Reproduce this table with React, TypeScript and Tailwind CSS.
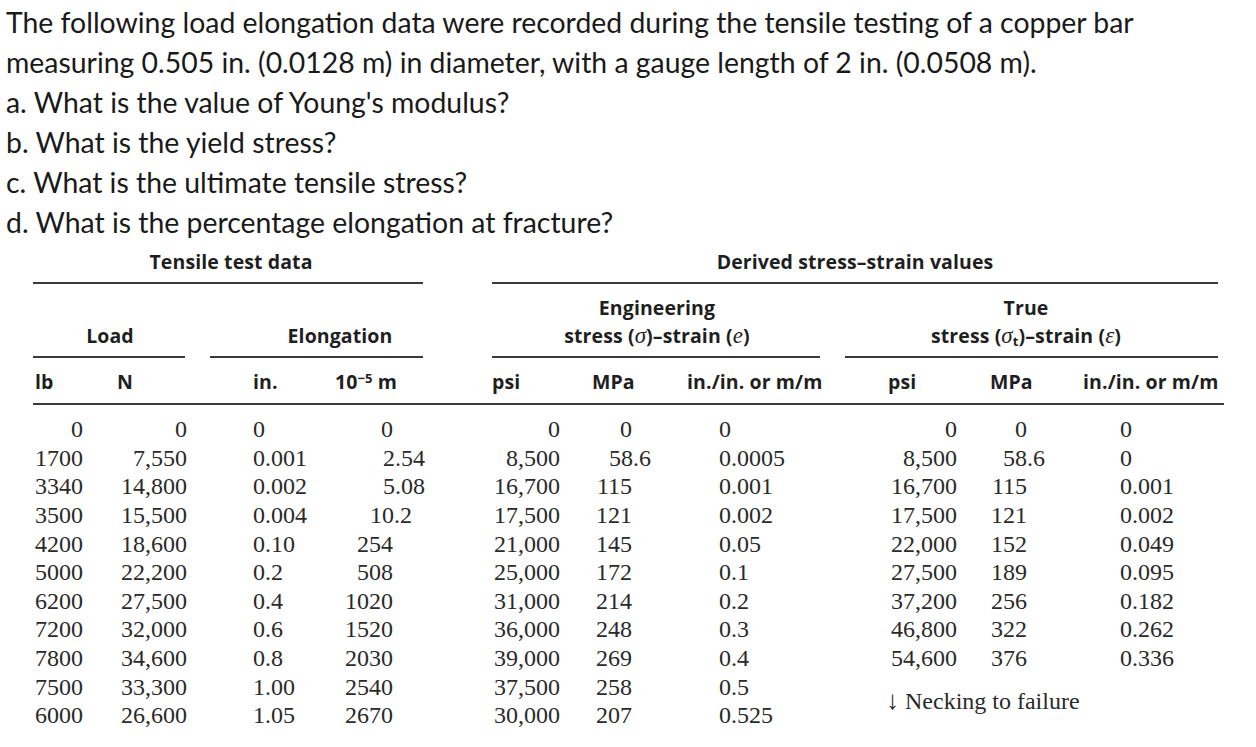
import React from "react";

const rows: string[][] = [
  ["0", "0", "0", "0", "0", "0", "0", "0", "0", "0"],
  ["1700", "7,550", "0.001", "2.54", "8,500", "58.6", "0.0005", "8,500", "58.6", "0"],
  ["3340", "14,800", "0.002", "5.08", "16,700", "115", "0.001", "16,700", "115", "0.001"],
  ["3500", "15,500", "0.004", "10.2", "17,500", "121", "0.002", "17,500", "121", "0.002"],
  ["4200", "18,600", "0.10", "254", "21,000", "145", "0.05", "22,000", "152", "0.049"],
  ["5000", "22,200", "0.2", "508", "25,000", "172", "0.1", "27,500", "189", "0.095"],
  ["6200", "27,500", "0.4", "1020", "31,000", "214", "0.2", "37,200", "256", "0.182"],
  ["7200", "32,000", "0.6", "1520", "36,000", "248", "0.3", "46,800", "322", "0.262"],
  ["7800", "34,600", "0.8", "2030", "39,000", "269", "0.4", "54,600", "376", "0.336"],
  ["7500", "33,300", "1.00", "2540", "37,500", "258", "0.5"],
  ["6000", "26,600", "1.05", "2670", "30,000", "207", "0.525"],
];

function dPad(v: string) {
  if (v === "2.54" || v === "5.08") return "pr-[5px]";
  if (v === "10.2") return "pr-[18px]";
  return "pr-[37px]";
}

function Rule({ className }: { className: string }) {
  return <div className={"h-[2px] bg-[#3a3a3a] " + className} />;
}

export default function App() {
  return (
    <div className="w-[1256px] h-[747px] bg-white overflow-hidden">
      <div className="pt-[2px] pl-[6px] font-['Lato',sans-serif] text-[28.4px] leading-[40px] text-[#1a1a1a]">
        <p>The following load elongation data were recorded during the tensile testing of a copper bar</p>
        <p>measuring 0.505 in. (0.0128 m) in diameter, with a gauge length of 2 in. (0.0508 m).</p>
        <p>a. What is the value of Young's modulus?</p>
        <p>b. What is the yield stress?</p>
        <p>c. What is the ultimate tensile stress?</p>
        <p>d. What is the percentage elongation at fracture?</p>
      </div>

      <div className="font-['Open_Sans',sans-serif] font-bold text-[19.5px] text-[#1f1f1f] tracking-[0.1px]">
        {/* Top group titles */}
        <div className="flex h-[40px] items-center">
          <div className="ml-[33px] w-[396px] text-center">Tensile test data</div>
          <div className="ml-[63px] w-[726px] text-center">Derived stress–strain values</div>
        </div>
        <div className="flex">
          <Rule className="ml-[33px] w-[390px]" />
          <Rule className="ml-[69px] w-[726px]" />
        </div>

        {/* Sub group titles */}
        <div className="flex mt-[10px] leading-[28px]">
          <div className="ml-[33px] w-[154px] pt-[28px] text-center">Load</div>
          <div className="ml-[23px] w-[260px] pt-[28px] text-center">Elongation</div>
          <div className="ml-[22px] w-[330px] text-center">
            <div>Engineering</div>
            <div>
              stress (<span className="font-['Liberation_Serif',serif] italic font-normal text-[23px]">σ</span>)–strain (
              <span className="font-['Liberation_Serif',serif] italic font-normal text-[23px]">e</span>)
            </div>
          </div>
          <div className="ml-[49px] w-[310px] text-center">
            <div>True</div>
            <div>
              stress (<span className="font-['Liberation_Serif',serif] italic font-normal text-[23px]">σ</span>
              <sub className="text-[13px]">t</sub>)–strain (
              <span className="font-['Liberation_Serif',serif] italic font-normal text-[23px]">ε</span>)
            </div>
          </div>
        </div>
        <div className="flex mt-[6px]">
          <Rule className="ml-[33px] w-[152px]" />
          <Rule className="ml-[25px] w-[213px]" />
          <Rule className="ml-[69px] w-[328px]" />
          <Rule className="ml-[25px] w-[373px]" />
        </div>

        {/* Column headers */}
        <div className="flex mt-[10px] h-[28px] items-center">
          <div className="w-[64px] ml-[33px] pl-[2px]">lb</div>
          <div className="w-[113px] pl-[20px]">N</div>
          <div className="w-[125px] pl-[43px]">in.</div>
          <div className="w-[95px]">
            10<sup className="text-[13px]">−5</sup> m
          </div>
          <div className="w-[62px]" />
          <div className="w-[100px]">psi</div>
          <div className="w-[95px]">MPa</div>
          <div className="w-[158px]">in./in. or m/m</div>
          <div className="w-[145px] pl-[43px]">psi</div>
          <div className="w-[93px]">MPa</div>
          <div className="w-[141px]">in./in. or m/m</div>
        </div>
        <div className="flex mt-[7px]">
          <Rule className="ml-[33px] w-[1191px]" />
        </div>
      </div>

      {/* Data */}
      <div className="mt-[10px] ml-[33px] grid grid-cols-[64px_113px_125px_95px_62px_100px_95px_158px_145px_93px_141px] auto-rows-[28.6px] items-center font-['Liberation_Serif',serif] text-[24px] leading-none text-[#2a2a2a]">
        {rows.map((r, i) => (
          <React.Fragment key={i}>
            <div className="text-right pr-[14px]">{r[0]}</div>
            <div className="text-right pr-[23px]">{r[1]}</div>
            <div className="pl-[43px]">{r[2]}</div>
            <div className={"text-right " + dPad(r[3])}>{r[3]}</div>
            <div />
            <div className="text-right pr-[32px]">{r[4]}</div>
            <div className={"text-right " + (r[5] === "58.6" ? "pr-[36px]" : "pr-[55px]")}>{r[5]}</div>
            <div className="pl-[32px]">{r[6]}</div>
            {r.length > 7 ? (
              <>
                <div className="text-right pr-[33px]">{r[7]}</div>
                <div className={"text-right " + (r[8] === "58.6" ? "pr-[38px]" : "pr-[56px]")}>{r[8]}</div>
                <div className="pl-[37px]">{r[9]}</div>
              </>
            ) : i === 9 ? (
              <div className="col-span-3 row-span-2 pl-[41px] self-center">
                <span className="text-[26px]">↓</span> Necking to failure
              </div>
            ) : null}
          </React.Fragment>
        ))}
      </div>
    </div>
  );
}
